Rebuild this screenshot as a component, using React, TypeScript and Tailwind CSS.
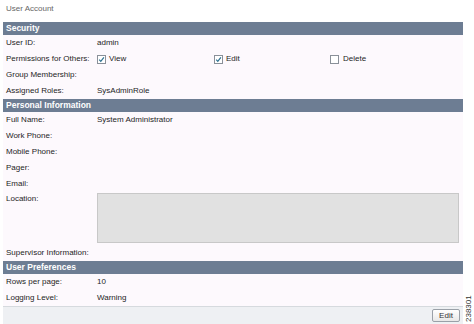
function Check({ checked }: { checked?: boolean }) {
  return (
    <svg width="9" height="9" viewBox="0 0 9 9" className="shrink-0">
      <rect x="0.5" y="0.5" width="8" height="8" fill="#fff" stroke="#8a9099" />
      {checked && <path d="M2.2 4.6 L3.8 6.3 L6.9 2.4" fill="none" stroke="#2b7090" strokeWidth="1.2" />}
    </svg>
  );
}

function Header({ title }: { title: string }) {
  return (
    <div className="h-[13px] bg-[#6d7d93] pl-[3px] text-[8.5px] leading-[13px] font-bold text-white">{title}</div>
  );
}

function Row({ label, children, h = "h-[16px]" }: { label: string; children?: React.ReactNode; h?: string }) {
  return (
    <div className={`${h} flex items-center pl-[3px]`}>
      <div className="w-[91px] shrink-0">{label}</div>
      <div className="flex-1 flex items-center">{children}</div>
    </div>
  );
}

export default function App() {
  return (
    <div className="relative w-[474px] h-[324px] overflow-hidden bg-white text-[8px] text-[#1e1e1e] font-['Liberation_Sans',Arial,sans-serif]">
      <div className="h-[22px] pl-[6px] pt-[4px] leading-[10px] text-[#666]">User Account</div>

      <div className="ml-[3px] w-[460px] bg-[#fdf9fd]">
        <Header title="Security" />
        <Row label="User ID:">admin</Row>
        <Row label="Permissions for Others:">
          <div className="w-[117px] flex items-center gap-[3px]"><Check checked /><span>View</span></div>
          <div className="w-[116px] flex items-center gap-[3px]"><Check checked /><span>Edit</span></div>
          <div className="flex items-center gap-[4px]"><Check /><span>Delete</span></div>
        </Row>
        <Row label="Group Membership:" />
        <Row label="Assigned Roles:">SysAdminRole</Row>

        <Header title="Personal Information" />
        <Row label="Full Name:">System Administrator</Row>
        <Row label="Work Phone:" />
        <Row label="Mobile Phone:" />
        <Row label="Pager:" />
        <Row label="Email:" />
        <div className="h-[53px] flex pl-[3px] pt-[1px]">
          <div className="w-[91px] shrink-0 leading-[9px] mt-[1px]">Location:</div>
          <div className="w-[362px] h-[50px] bg-[#e1e1e1] border border-[#c8c8c8]" />
        </div>
        <Row label="Supervisor Information:" />

        <Header title="User Preferences" />
        <Row label="Rows per page:">10</Row>
        <Row label="Logging Level:">Warning</Row>

        <div className="h-[18px] bg-[#eef0f3] border-t border-[#d6dade] flex items-center justify-end pr-[3px]">
          <button className="h-[13px] w-[28px] rounded-[2px] border border-[#9aa0a8] bg-gradient-to-b from-white to-[#e8e8e8] text-[8px] leading-[11px] text-[#333]">Edit</button>
        </div>
      </div>

      <div className="absolute left-[465px] top-[322px] origin-top-left -rotate-90 text-[8px] leading-[8px] text-[#333]">238301</div>
    </div>
  );
}
